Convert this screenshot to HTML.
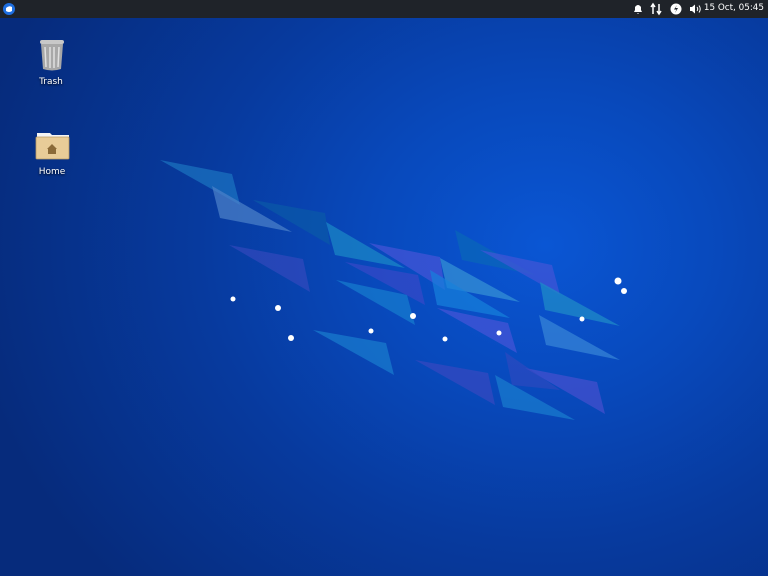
<!DOCTYPE html>
<html><head><style>
html,body{margin:0;padding:0;width:768px;height:576px;overflow:hidden;font-family:"DejaVu Sans",sans-serif}
body{background:radial-gradient(ellipse 580px 500px at 545px 245px,#0a56d4 0%,#0849bc 30%,#073a9e 60%,#062b7c 100%)}
.panel{position:absolute;left:0;top:0;width:768px;height:18px;background:#1f2329}
.lbl{position:absolute;color:#fff;font-size:9px;text-shadow:0 1px 2px #000;text-align:center;width:60px}
</style></head><body>
<svg width="768" height="576" style="position:absolute;left:0;top:0">
<g opacity=".85">
<polygon points="160,160 232,174 240,205" fill="#1f7fc8" opacity=".7"/>
<polygon points="212,186 220,218 292,232" fill="#5a8fd0" opacity=".7"/>
<polygon points="253,200 325,213 330,245" fill="#0a5aa8" opacity=".8"/>
<polygon points="326,222 335,255 405,268" fill="#1e90c8" opacity=".75"/>
<polygon points="229,245 303,259 310,292" fill="#3a4ac0" opacity=".7"/>
<polygon points="369,243 440,257 445,290" fill="#4a55d8" opacity=".8"/>
<polygon points="345,262 418,275 425,305" fill="#3a48c8" opacity=".8"/>
<polygon points="336,280 407,295 415,325" fill="#1880d0" opacity=".8"/>
<polygon points="440,258 447,288 520,302" fill="#3ea0d8" opacity=".7"/>
<polygon points="430,270 437,305 510,318" fill="#1a8ae0" opacity=".7"/>
<polygon points="455,230 462,260 535,275" fill="#0a68b8" opacity=".8"/>
<polygon points="480,250 552,265 560,295" fill="#4a55d8" opacity=".75"/>
<polygon points="540,282 545,310 620,326" fill="#2090c8" opacity=".8"/>
<polygon points="539,315 546,345 620,360" fill="#3a88d8" opacity=".8"/>
<polygon points="437,308 508,323 517,353" fill="#4a55d8" opacity=".8"/>
<polygon points="313,330 386,343 394,375" fill="#1a80d0" opacity=".8"/>
<polygon points="415,360 488,373 495,405" fill="#3a48c0" opacity=".8"/>
<polygon points="525,368 597,382 605,414" fill="#4a50d0" opacity=".8"/>
<polygon points="505,352 512,385 560,390" fill="#3a48c0" opacity=".6"/>
<polygon points="495,375 503,407 575,420" fill="#1a80d0" opacity=".8"/>
</g>
<g fill="#fff">
<circle cx="233" cy="299" r="2.5"/><circle cx="278" cy="308" r="3"/><circle cx="291" cy="338" r="3"/>
<circle cx="371" cy="331" r="2.5"/><circle cx="413" cy="316" r="3"/><circle cx="445" cy="339" r="2.5"/>
<circle cx="499" cy="333" r="2.5"/><circle cx="582" cy="319" r="2.5"/><circle cx="618" cy="281" r="3.5"/><circle cx="624" cy="291" r="3"/>
</g>
<g>
<rect x="40" y="40" width="24" height="4" rx="2" fill="#c8c8c8"/>
<path d="M41,44 L63,44 L61,69 Q52,72 43,69 Z" fill="#a8a8a8"/>
<path d="M45,47 L46,67 M50,47 L50,68 M54,47 L54,68 M59,47 L58,67" stroke="#e0e0e0" stroke-width="1.5"/>
<path d="M37,133 L50,133 L52,135 L69,135 L69,140 L37,140 Z" fill="#f4f4f4"/>
<rect x="36" y="137" width="33" height="22" rx="1" fill="#e8cc98" stroke="#b89a64" stroke-width="0.8"/>
<path d="M47,149 L52,144 L57,149 L56,149 L56,154 L48,154 L48,149 Z" fill="#8a6a38"/>
</g>
</svg>
<div class="panel">
<svg width="768" height="18" style="position:absolute;left:0;top:0">
<circle cx="9" cy="9" r="6" fill="#1f6fe0"/>
<path d="M6,8 Q9,5 12,7 L12,11 Q9,13 6,11 Z" fill="#fff"/>
<path d="M634,12 L642,12 L641,10 L641,7 Q638,3 635,7 L635,10 Z M637,13 L639,13 L638,14Z" fill="#fff"/>
<path d="M653,14 L653,5 M651,7 L653,4 L655,7 M659,4 L659,13 M657,11 L659,14 L661,11" stroke="#fff" stroke-width="1.5" fill="none"/>
<circle cx="676" cy="9" r="5.5" fill="#fff"/><path d="M677,5 L674,9.5 L676.5,9.5 L675,13 L678,8 L675.5,8 Z" fill="#1f2329"/>
<path d="M690,7 L692,7 L695,4.5 L695,13.5 L692,11 L690,11 Z" fill="#fff"/>
<path d="M697,7 Q698.5,9 697,11 M699,5.5 Q701.5,9 699,12.5" stroke="#fff" fill="none" stroke-width="1"/>
</svg>
<div style="position:absolute;right:4px;top:3px;color:#fff;font-size:8.8px;white-space:nowrap;font-family:'DejaVu Sans',sans-serif">15 Oct, 05:45</div>
</div>
<div class="lbl" style="left:21px;top:77px">Trash</div>
<div class="lbl" style="left:22px;top:167px">Home</div>
</body></html>
